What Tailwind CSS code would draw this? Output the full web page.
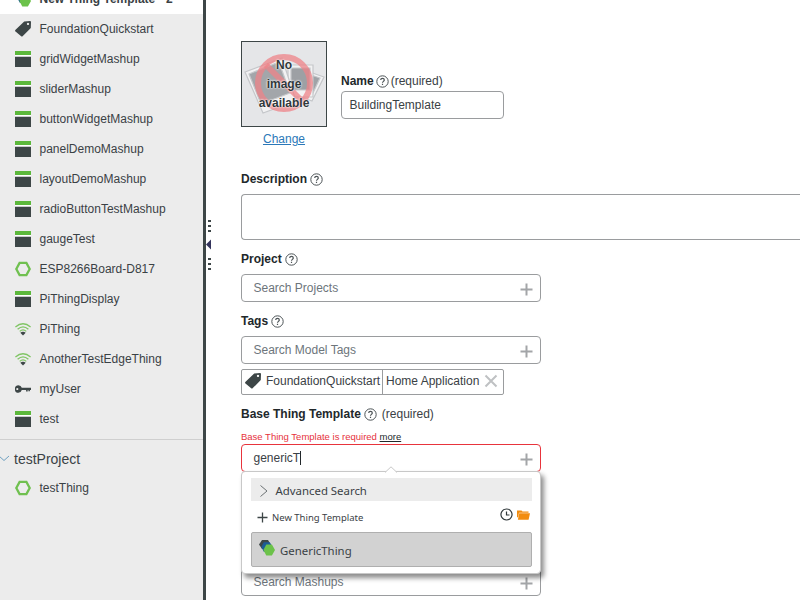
<!DOCTYPE html>
<html lang="en">
<head>
    <meta charset="UTF-8">
    <meta name="viewport" content="width=device-width, initial-scale=1.0">
    <title>New Thing Template</title>
    <script src="https://cdn.jsdelivr.net/npm/@tailwindcss/browser@4"></script>
</head>
<body class="h-[600px] overflow-hidden bg-white font-['Liberation_Sans',Arial,sans-serif] text-xs text-[#3a4145]">
    <!-- Shared icons -->
    <svg class="hidden">
        <symbol id="mashup" viewBox="0 0 16 16">
            <path fill="#5cb83c" d="M0 0h16v4H0z"/>
            <path fill="#fff" d="M0 4h16v1H0z"/>
            <path fill="#c9cccc" d="M0 5h16v1H0z"/>
            <path fill="#3d4647" d="M0 6h16v10H0z"/>
        </symbol>
        <symbol id="tag" viewBox="0 0 16 16">
            <path fill="#3d4647" fill-rule="evenodd" d="M9.200.5 15 0q1 0 1 1l-.2 6L7.600 15.300q-.7.6-1.400 0L.5 10.600q-.8-.7-.2-1.600zM13 1.800a1.100 1.100 0 1 0 .01 0z"/>
        </symbol>
        <symbol id="hexagon" viewBox="0 0 16 16">
            <path fill="none" stroke="#70c050" stroke-width="2.300" d="M4.600 1.900h6.800L14.700 8l-3.300 6.100H4.600L1.300 8z"/>
        </symbol>
        <symbol id="wifi" viewBox="0 0 16 16">
            <g fill="none" stroke="#80c565" stroke-width="1.300">
                <path d="M.4 6Q8-.6 15.600 6"/>
                <path d="M2.600 8.300Q8 3.400 13.400 8.300"/>
                <path d="M4.700 10.400Q8 7.300 11.300 10.400"/>
            </g>
            <path fill="#3d4647" d="M5.300 11.800Q8 9.700 10.700 11.800L8 14.500z"/>
        </symbol>
        <symbol id="key" viewBox="0 0 16 16">
            <path fill="#3d4647" fill-rule="evenodd" d="M3.400 4.200a3.600 3.600 0 0 1 3.400 2.600H16v2.300h-1.100v1.200h-1.500V9.100h-.7v1.500h-1.600V9.100H6.800A3.600 3.600 0 0 1 3.400 11.800 3.500 3.800 0 0 1 3.400 4.200zM2.300 6.900a1.100 1.100 0 1 0 .01 0z"/>
        </symbol>
        <symbol id="template" viewBox="0 0 16 16">
            <path fill="#3d4647" d="M3 0h6l2.700 4.500L9 9H3L0 4.500z"/>
            <path fill="#1c5c97" d="M4.800 2.300h6l2.500 4.400-2.500 5h-6L2.300 7z"/>
            <path fill="#6cc24a" d="M7.300 4.600h5.600L16 10l-3.100 5.400H7.300L4.400 10z"/>
        </symbol>
        <symbol id="help" viewBox="0 0 13 13">
            <circle cx="6.500" cy="6.500" r="5.700" fill="none" stroke="#4c5356"/>
            <path fill="none" stroke="#4c5356" stroke-width="1.200" d="M4.700 5.100c0-2.200 3.600-2.200 3.600 0 0 1.200-1.800 1.400-1.800 2.700M6.500 8.800V10"/>
        </symbol>
        <symbol id="plus" viewBox="0 0 13 13">
            <path fill="none" stroke="currentColor" stroke-width="2" d="M6.500.5v12M.5 6.500h12"/>
        </symbol>
    </svg>

    <div class="flex h-full">
        <!-- Sidebar -->
        <aside class="w-[206px] h-full shrink-0 border-r-3 border-[#3d4647] bg-[#ececec]">
            <ul class="-mt-4 [&>li]:h-[30px] [&>li]:flex [&>li]:items-center [&>li]:gap-[8.5px] [&>li]:pl-[15px] [&_svg]:size-4 [&_svg]:shrink-0 whitespace-nowrap">
                <li class="bg-white font-bold"><svg><use href="#template"/></svg>New Thing Template - 2</li>
                <li><svg><use href="#tag"/></svg>FoundationQuickstart</li>
                <li><svg><use href="#mashup"/></svg>gridWidgetMashup</li>
                <li><svg><use href="#mashup"/></svg>sliderMashup</li>
                <li><svg><use href="#mashup"/></svg>buttonWidgetMashup</li>
                <li><svg><use href="#mashup"/></svg>panelDemoMashup</li>
                <li><svg><use href="#mashup"/></svg>layoutDemoMashup</li>
                <li><svg><use href="#mashup"/></svg>radioButtonTestMashup</li>
                <li><svg><use href="#mashup"/></svg>gaugeTest</li>
                <li><svg><use href="#hexagon"/></svg>ESP8266Board-D817</li>
                <li><svg><use href="#mashup"/></svg>PiThingDisplay</li>
                <li><svg><use href="#wifi"/></svg>PiThing</li>
                <li><svg><use href="#wifi"/></svg>AnotherTestEdgeThing</li>
                <li><svg><use href="#key"/></svg>myUser</li>
                <li><svg><use href="#mashup"/></svg>test</li>
            </ul>
            <div class="mt-[5px] border-t border-[#cfcfcf] pt-1">
                <div class="flex h-[30px] items-center gap-[5px] text-sm">
                    <svg class="mb-0.5 h-[7px] w-[9px]" viewBox="0 0 9 7"><path fill="none" stroke="#6fa0c0" d="M-1 1l5 4.500L9 1"/></svg>
                    testProject
                </div>
                <div class="flex h-7 items-center gap-[8.5px] pl-[15px]"><svg class="size-4"><use href="#hexagon"/></svg>testThing</div>
            </div>
        </aside>

        <!-- Splitter handle -->
        <div class="flex w-[6px] shrink-0 flex-col items-center pt-[220px]">
            <svg class="h-[50px] w-[6px]" viewBox="0 0 6 50">
                <path fill="#3d4647" d="M2 0h3v2H2zM2 5h3v2H2zM2 10h3v2H2zM2 38h3v2H2zM2 43h3v2H2zM2 48h3v2H2z"/>
                <path fill="#34345c" d="M5 19.500v10L0 24.500z"/>
            </svg>
        </div>

        <!-- Form -->
        <main class="min-w-0 flex-1 pt-[41px] pl-[29px]">
            <div class="flex gap-3.5">
                <div class="w-[86px] text-center">
                    <div class="relative h-[86px] border border-[#3d4647] bg-[#e5e6e8]">
                        <svg class="size-[84px]" viewBox="0 0 84 84">
                            <g stroke="#c5c7ca" stroke-width="1.200">
                                <path fill="#f2f2f3" d="M62 28l20 7-12 24-16-6z"/>
                                <path fill="#a0a3a7" d="M63 31l15 5-8 17-12-4z"/>
                                <path fill="#f2f2f3" d="M46 23h25v32H46z"/>
                                <path fill="#9da0a4" d="M49 26h19v22H49z"/>
                                <path fill="#f2f2f3" d="M3 30l37-14 14 43-33 12z"/>
                                <path fill="#a3a6aa" d="M7 32l30-12 11 31-29 11z"/>
                            </g>
                            <g fill="none" stroke="#ee8388" stroke-opacity=".75" stroke-width="6">
                                <circle cx="42" cy="41" r="26"/>
                                <path d="M24 23l36 36"/>
                            </g>
                        </svg>
                        <div class="absolute inset-0 pt-[14px] font-bold leading-[19px] text-[#30383b] [text-shadow:0_0_2px_#fff,0_0_2px_#fff]">No<br>image<br>available</div>
                    </div>
                    <a class="mt-1 block leading-4 text-[#2b78b8] underline">Change</a>
                </div>
                <div class="w-[163px] pt-[31px]">
                    <div class="mb-px flex h-[18px] items-center whitespace-nowrap"><b class="text-[#22282b]">Name</b><svg class="ml-0.5 mr-0.5 size-[13px]"><use href="#help"/></svg>(required)</div>
                    <div class="flex h-7 items-center rounded-[4px] border border-[#9a9c9e] pl-[7.5px]">BuildingTemplate</div>
                </div>
            </div>

            <div class="mt-[23px] flex h-[18px] items-center gap-[3px]"><b class="text-[#22282b]">Description</b><svg class="size-[13px]"><use href="#help"/></svg></div>
            <div class="mt-1.5 h-[46px] rounded-l-[4px] border border-r-0 border-[#9a9c9e]"></div>

            <div class="w-[300px]">
                <div class="mt-2.5 flex h-[18px] items-center gap-[3px]"><b class="text-[#22282b]">Project</b><svg class="size-[13px]"><use href="#help"/></svg></div>
                <div class="mt-1.5 flex h-7 items-center justify-between rounded-[4px] border border-[#9a9c9e] pr-[7px] pl-[11.5px] text-[#6d757b]">Search Projects<svg class="mt-0.5 size-[13px] text-[#a3a5a8]"><use href="#plus"/></svg></div>

                <div class="mt-2.5 flex h-[18px] items-center gap-[3px]"><b class="text-[#22282b]">Tags</b><svg class="size-[13px]"><use href="#help"/></svg></div>
                <div class="mt-1.5 flex h-7 items-center justify-between rounded-[4px] border border-[#9a9c9e] pr-[7px] pl-[11.5px] text-[#6d757b]">Search Model Tags<svg class="mt-0.5 size-[13px] text-[#a3a5a8]"><use href="#plus"/></svg></div>
                <div class="mt-[5px] flex h-[26px] w-[263px] rounded-[2px] border border-[#9a9c9e] whitespace-nowrap">
                    <div class="flex w-[141px] items-center gap-[5px] border-r border-[#9a9c9e] pb-0.5 pl-[3px]"><svg class="size-4 shrink-0"><use href="#tag"/></svg>FoundationQuickstart</div>
                    <div class="flex flex-1 items-center justify-between pr-[5px] pb-0.5 pl-[3px]">Home Application<svg class="size-[14px]" viewBox="0 0 14 14"><path fill="none" stroke="#bfc1c3" stroke-width="2" d="M1.500 1.500l11 11M12.500 1.500l-11 11"/></svg></div>
                </div>

                <div class="mt-2.5 flex h-[18px] items-center gap-[3px]"><b class="text-[#22282b]">Base Thing Template</b><svg class="size-[13px]"><use href="#help"/></svg><span class="ml-0.5">(required)</span></div>
                <div class="mt-[7px] h-[13px] text-[9.5px] leading-[13px] text-[#e6323c]">Base Thing Template is required <a class="text-[#22282b] underline">more</a></div>
                <div class="relative mt-px h-[124px]">
                    <div class="flex h-7 items-center rounded-[4px] border border-[#e8343c] pr-[7px] pl-[11.5px]">genericT<i class="h-3.5 w-px bg-[#22282b]"></i><svg class="mt-0.5 ml-auto size-[13px] text-[#a3a5a8]"><use href="#plus"/></svg></div>

                    <!-- Search results popup -->
                    <div class="absolute top-[27px] left-0 z-10 h-[103px] w-[300px] rounded-[4px] border border-[#c8c8c8] bg-white pt-1.5 pr-2 pl-[9px] font-['Noto_Sans','Open_Sans',sans-serif] shadow-[3px_4px_5px_rgba(0,0,0,0.45)]">
                        <svg class="absolute -top-[6px] left-[143px] h-[7px] w-3" viewBox="0 0 12 7"><path fill="#fff" stroke="#c8c8c8" d="M0 6.500L6 .8l6 5.700"/><path fill="#fff" d="M1 6h10v1H1z"/></svg>
                        <div class="flex h-[23px] items-center bg-[#ececec] pl-2">
                            <svg class="mt-0.5 mr-[6.5px] h-3.5 w-[10px]" viewBox="0 0 10 14"><path fill="none" stroke="#6c7274" d="M1.500 1.500l6.500 5.500-6.500 5.500"/></svg>
                            <span class="pt-0.5 text-[11.4px]">Advanced Search</span>
                        </div>
                        <div class="flex h-[31px] items-center pr-0.5 pl-1.5">
                            <svg class="mt-0.5 mr-1 size-[11px]" viewBox="0 0 11 11"><path fill="none" stroke="#3d4647" stroke-width="1.300" d="M5.500.5v10M.5 5.500h10"/></svg>
                            <span class="pt-[3px] text-[9.5px]">New Thing Template</span>
                            <svg class="mb-1 ml-auto size-[13px]" viewBox="0 0 13 13"><path fill="none" stroke="#30383b" stroke-width="1.200" d="M6.500 1a5.500 5.500 0 1 0 .01 0zM6.500 3.500v3.500h3"/></svg>
                            <svg class="mb-[3px] ml-1 h-[10px] w-[13px]" viewBox="0 0 13 10"><path fill="#f28c0f" d="M0 .5h4.500l1 1H11.500v1.300H2L1 7.500 0 7zM2.200 3.200H13L11.600 9.800H.9z"/></svg>
                        </div>
                        <div class="flex h-[35px] items-center gap-[5px] rounded-[2px] border border-[#afafaf] bg-[#d2d2d2] pl-[7px]">
                            <svg class="mb-1 size-4"><use href="#template"/></svg>
                            <span class="pt-[3px] text-[11.4px]">GenericThing</span>
                        </div>
                    </div>
                </div>
                <div class="flex h-7 items-center justify-between rounded-[4px] border border-[#9a9c9e] pr-[7px] pl-[11.5px] text-[#6d757b]">Search Mashups<svg class="mt-0.5 size-[13px] text-[#a3a5a8]"><use href="#plus"/></svg></div>
            </div>
        </main>
    </div>
</body>
</html>
